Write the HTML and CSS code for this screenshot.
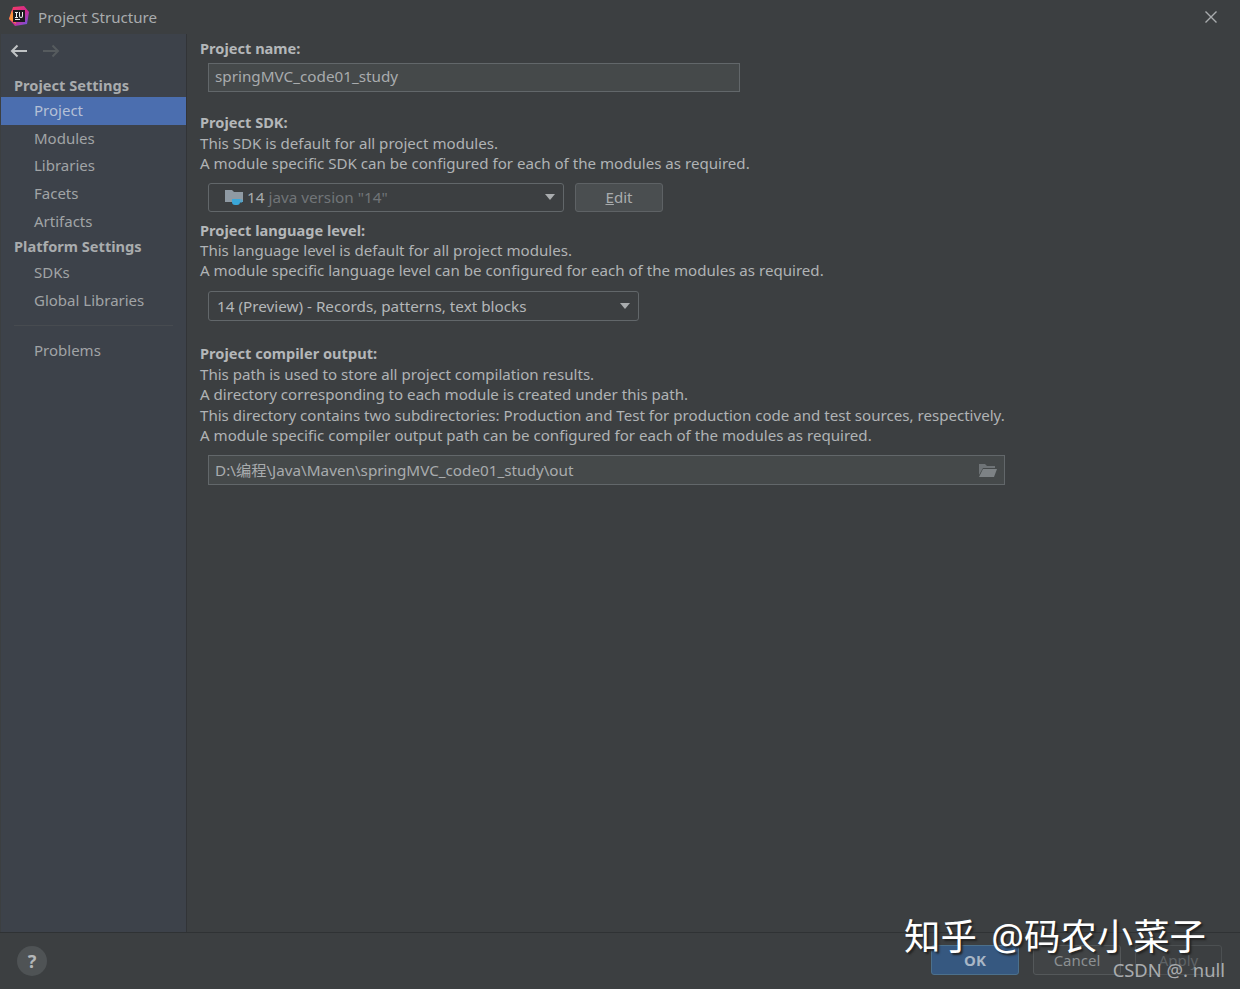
FILE: index.html
```html
<!DOCTYPE html>
<html lang="en">
<head>
<meta charset="utf-8">
<title>Project Structure</title>
<link rel="stylesheet" href="styles.css">
</head>
<body>
<div class="app">
  <header class="titlebar">
    <svg class="logo" width="20" height="20" viewBox="0 0 20 20">
      <defs>
        <linearGradient id="lg" x1="0" y1="0" x2="1" y2="1">
          <stop offset="0" stop-color="#fc3f5b"/><stop offset=".55" stop-color="#d0288f"/><stop offset="1" stop-color="#5d5ff0"/>
        </linearGradient>
      </defs>
      <path d="M4 1 L15 0 L20 6 L18 18 L6 20 L0 13 Z" fill="url(#lg)"/>
      <path d="M0 13 L3 4 L7 18 Z" fill="#f9913a"/>
      <rect x="4" y="4" width="12" height="12" fill="#1a1a1e"/>
      <rect x="6" y="13" width="5" height="1" fill="#eee"/>
      <path d="M6 6h3v1h-1v4h1v1H6v-1h1V7H6z M10 6h1v4q0 1 1 1t1-1V6h1v4q0 2-2 2t-2-2z" fill="#eee"/>
    </svg>
    <span class="title">Project Structure</span>
    <svg class="close" width="14" height="14" viewBox="0 0 14 14"><path d="M1.5 1.5 L12.5 12.5 M12.5 1.5 L1.5 12.5" stroke="#a9acae" stroke-width="1.4" fill="none"/></svg>
  </header>
  <div class="body">
    <nav class="sidebar">
      <div class="history">
        <svg width="18" height="14" viewBox="0 0 18 14"><path d="M17 7H2 M7.5 1.5 L2 7 L7.5 12.5" stroke="#c0c3c5" stroke-width="2" fill="none"/></svg>
        <svg width="18" height="14" viewBox="0 0 18 14"><path d="M1 7H16 M10.5 1.5 L16 7 L10.5 12.5" stroke="#565b5e" stroke-width="2" fill="none"/></svg>
      </div>
      <div class="group">Project Settings</div>
      <div class="item active">Project</div>
      <div class="item">Modules</div>
      <div class="item">Libraries</div>
      <div class="item">Facets</div>
      <div class="item">Artifacts</div>
      <div class="group second">Platform Settings</div>
      <div class="item">SDKs</div>
      <div class="item">Global Libraries</div>
      <div class="divider"></div>
      <div class="item">Problems</div>
    </nav>
    <main class="content">
      <label class="heading">Project name:</label>
      <div class="field name-field"><span class="field-text">springMVC_code01_study</span></div>

      <label class="heading sdk-heading">Project SDK:</label>
      <p class="line">This SDK is default for all project modules.</p>
      <p class="line">A module specific SDK can be configured for each of the modules as required.</p>
      <div class="sdk-row">
        <div class="select sdk-select">
          <svg class="jdk" width="20" height="18" viewBox="0 0 20 18">
            <path d="M1 2h7l2 2h9v10H1z" fill="#8f9aa3"/>
            <path d="M8 11h8v3q0 3-3 3h-2q-3 0-3-3z" fill="#3aa7d8"/>
            <path d="M16 12h2v2h-2" fill="none" stroke="#3aa7d8"/>
          </svg>
          <span class="sdk-num">14</span><span class="sdk-ver">java version "14"</span>
          <span class="caret"></span>
        </div>
        <button class="btn edit"><u>E</u>dit</button>
      </div>

      <label class="heading level-heading">Project language level:</label>
      <p class="line">This language level is default for all project modules.</p>
      <p class="line">A module specific language level can be configured for each of the modules as required.</p>
      <div class="select level-select"><span>14 (Preview) - Records, patterns, text blocks</span><span class="caret"></span></div>

      <label class="heading output-heading">Project compiler output:</label>
      <p class="line">This path is used to store all project compilation results.</p>
      <p class="line">A directory corresponding to each module is created under this path.</p>
      <p class="line">This directory contains two subdirectories: Production and Test for production code and test sources, respectively.</p>
      <p class="line">A module specific compiler output path can be configured for each of the modules as required.</p>
      <div class="field path-field">
        <span class="field-text">D:\编程\Java\Maven\springMVC_code01_study\out</span>
        <svg width="20" height="16" viewBox="0 0 20 16"><path d="M1 2h6l2 2h8v2H5L1 13z" fill="#6f7477"/><path d="M5 7h14l-3 8H1z" fill="#7d8285"/></svg>
      </div>
    </main>
  </div>
  <footer class="footer">
    <div class="help">?</div>
    <div class="actions">
      <button class="btn ok">OK</button>
      <button class="btn cancel">Cancel</button>
      <button class="btn apply">Apply</button>
    </div>
    <div class="wm-zhihu">知乎 @码农小菜子</div>
    <div class="wm-csdn">CSDN @. null</div>
  </footer>
</div>
</body>
</html>
```
FILE: styles.css
```css
* { box-sizing: border-box; }
html, body { margin: 0; height: 100%; }
body {
  background: #3c3f41;
  font-family: "Noto Sans", "Noto Sans CJK SC", sans-serif;
  font-size: 15.1px;
  color: #b4b7b9;
  overflow: hidden;
}
.app { width: 1240px; height: 989px; display: flex; flex-direction: column; }

.titlebar { height: 34px; flex: none; display: flex; align-items: center; padding: 0 22px 0 9px; }
.logo { margin-top: -2px; }
.title { margin-left: 9px; color: #a9acae; }
.close { margin-left: auto; }

.body { flex: 1; display: flex; min-height: 0; }
.sidebar {
  width: 186px; flex: none; margin-left: 1px;
  background: #3d424a;
  border-right: 1px solid #323437;
  display: flex; flex-direction: column;
}
.history { height: 34px; display: flex; align-items: center; gap: 14px; padding-left: 9px; margin-bottom: 6px; }
.group { height: 23px; line-height: 22px; padding-left: 13px; font-weight: 700; font-size: 14.6px; color: #a9acae; }
.group.second { height: 23.5px; }
.item { height: 27.7px; line-height: 27px; padding-left: 33px; font-size: 15px; color: #a1a4a6; }
.item.active { background: #4b6eaf; color: #b5c0d6; }
.divider { height: 1px; background: #474b50; margin: 11px 13px; }

.content { flex: 1; padding: 3px 0 0 13px; }
.heading { display: block; height: 22px; line-height: 22px; font-weight: 700; font-size: 14.6px; color: #b4b7b9; }
.line { margin: 0; height: 20.3px; line-height: 20px; color: #b0b3b5; }
.field, .select {
  margin-left: 8px;
  height: 29px;
  border: 1px solid #62676a;
  display: flex; align-items: center;
  font-size: 15.25px;
}
.field { background: #45494a; padding: 0 6px; color: #a9acae; }
.field-text { margin-bottom: 3px; }
.name-field { width: 532px; margin-top: 4px; }
.sdk-heading { margin-top: 19px; }
.sdk-row { display: flex; gap: 11px; margin-top: 9px; margin-left: 8px; }
.select { border-radius: 3px; background: #3c3f41; padding: 0 8px; }
.sdk-select { width: 356px; margin-left: 0; padding-left: 15px; }
.jdk { margin-right: 3px; }
.sdk-num { color: #a9acae; margin-right: 4px; }
.sdk-ver { color: #717578; }
.caret {
  margin-left: auto;
  width: 0; height: 0;
  border-left: 5px solid transparent; border-right: 5px solid transparent;
  border-top: 6px solid #a9acae;
}
.btn {
  font: inherit; color: #a9acae;
  border: 1px solid #5e6265; border-radius: 3px;
  background: #4a4e50; height: 29px; padding: 0;
}
.edit { width: 88px; }
.level-heading { margin-top: 7px; height: 21px; }
.level-select { width: 431px; height: 30px; margin-top: 11px; }
.output-heading { margin-top: 21px; }
.path-field { width: 797px; height: 30px; margin-top: 10px; justify-content: space-between; }

.footer {
  height: 57px; flex: none; position: relative;
  border-top: 1px solid #2f3234;
  display: flex; align-items: center;
  padding: 0 18px 0 17px;
}
.help {
  width: 30px; height: 30px; border-radius: 50%;
  background: #4f5355; color: #b4b7b9; font-weight: 700; font-size: 18px;
  display: flex; align-items: center; justify-content: center;
  margin-top: -1px;
}
.actions { margin-left: auto; display: flex; gap: 14px; margin-top: -2px; }
.actions .btn { width: 88px; height: 30px; font-size: 15px; }
.actions .apply { width: 87px; }
.ok { background: #365880; border-color: #4c708c; color: #a8b6c6; font-weight: 700 !important; }
.cancel { background: #414446; border-color: #54585a; color: #8c9092; }
.apply { background: #3c3f41; border-color: #4c5052; color: #5f6366; }
.wm-zhihu {
  position: absolute; right: 34px; top: -21px;
  font-size: 36.4px; word-spacing: 5px; line-height: 48px; color: #fff;
  text-shadow: 2px 2px 2px #222;
  white-space: nowrap;
}
.wm-csdn {
  position: absolute; right: 15px; top: 23px;
  font-size: 18.4px; line-height: 28px; color: #a9acae;
  white-space: nowrap;
}
```
